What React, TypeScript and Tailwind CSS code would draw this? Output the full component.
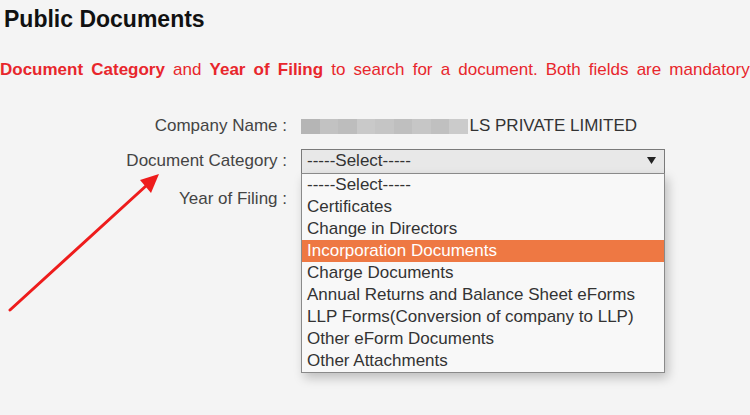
import React from "react";

const OPTIONS = [
  "-----Select-----",
  "Certificates",
  "Change in Directors",
  "Incorporation Documents",
  "Charge Documents",
  "Annual Returns and Balance Sheet eForms",
  "LLP Forms(Conversion of company to LLP)",
  "Other eForm Documents",
  "Other Attachments",
];

// blurred company name — blocks of grey
const BLUR = ["#b5b5b5", "#c2c2c2", "#bdbdbd", "#c9c9c9", "#c5c5c5", "#bfbfbf", "#c6c6c6", "#c0c0c0", "#cbcbcb"];

function FieldLabel({ children }: { children: React.ReactNode }) {
  return <div className="w-[287px] text-right text-[17px] leading-[22px] text-[#444]">{children}</div>;
}

export default function App() {
  const highlighted = 3;

  return (
    <div
      className="relative w-[750px] h-[415px] overflow-hidden bg-[#f4f4f4]"
      style={{ fontFamily: '"Liberation Sans", Arial, sans-serif' }}
    >
      <h2 className="mt-[5px] pl-[4px] text-[23px] leading-[28px] font-bold text-[#111]">Public Documents</h2>

      {/* justified in the original page, so the word gaps are a bit wider */}
      <p className="mt-[26px] whitespace-nowrap text-[17px] leading-[22px] [word-spacing:3.4px] text-[#e8262c]">
        <b>Document Category</b> and <b>Year of Filing</b> to search for a document. Both fields are mandatory
      </p>

      {/* form */}
      <div className="mt-[34px] flex flex-col">
        <div className="flex items-center h-[22px]">
          <FieldLabel>Company Name :</FieldLabel>
          <div className="ml-[14px] flex items-center">
            <div className="flex h-[15px]">
              {BLUR.map((c, i) => (
                <div key={i} className="w-[18.5px] h-full" style={{ backgroundColor: c }} />
              ))}
            </div>
            <span className="ml-[2px] text-[17px] leading-[22px] text-[#333]">LS PRIVATE LIMITED</span>
          </div>
        </div>

        <div className="mt-[13px] flex items-center h-[22px]">
          <FieldLabel>Document Category :</FieldLabel>
          <div className="relative ml-[14px]">
            <div className="flex items-center justify-between w-[364px] h-[25px] border border-[#7a7a7a] bg-[#e8e8e8] px-[5px] text-[17px] leading-[22px] text-[#333]">
              <span>-----Select-----</span>
              <svg width="10" height="8" viewBox="0 0 10 8" className="mr-[2px]">
                <path d="M0 0 H9 L4.5 7 Z" fill="#222" />
              </svg>
            </div>

            {/* open list */}
            <div className="absolute left-0 top-[24px] z-10 w-[364px] border border-[#8a8a8a] bg-[#f8f8f8] shadow-[3px_5px_10px_rgba(0,0,0,0.22)]">
              {OPTIONS.map((o, i) => (
                <div
                  key={o}
                  className={
                    i === highlighted
                      ? "h-[22px] px-[5px] text-[17px] leading-[22px] bg-[#ee7843] text-white"
                      : "h-[22px] px-[5px] text-[17px] leading-[22px] text-[#333]"
                  }
                >
                  {o}
                </div>
              ))}
            </div>
          </div>
        </div>

        <div className="mt-[16px] flex items-center h-[22px]">
          <FieldLabel>Year of Filing :</FieldLabel>
        </div>
      </div>

      {/* annotation arrow */}
      <svg className="absolute left-0 top-0 pointer-events-none" width="750" height="415">
        <line x1="10" y1="310" x2="147" y2="185" stroke="#ee1c1c" strokeWidth="3" strokeLinecap="round" />
        <path d="M159 174 L140 180 L151 193 Z" fill="#ee1c1c" />
      </svg>
    </div>
  );
}
